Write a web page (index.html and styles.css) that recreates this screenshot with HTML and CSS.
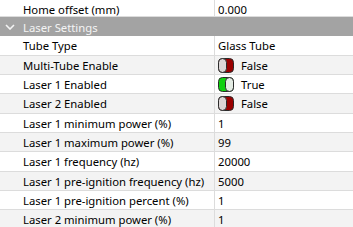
FILE: index.html
```html
<!DOCTYPE html>
<html>
<head>
<meta charset="utf-8">
<link rel="stylesheet" href="styles.css">
</head>
<body>
<div class="grid">
  <div class="row odd first"><div class="label">Home offset (mm)</div><div class="value">0.000</div></div>
  <div class="cat"><svg class="chev" width="10" height="6" viewBox="0 0 10 6"><polyline points="1,1 5,5 9,1" fill="none" stroke="#f4f4f4" stroke-width="1.6"/></svg><span>Laser Settings</span></div>
  <div class="row odd"><div class="label">Tube Type</div><div class="value">Glass Tube</div></div>
  <div class="row even"><div class="label">Multi-Tube Enable</div><div class="value"><svg class="toggle" width="16" height="15" viewBox="0 0 16 15"><rect x="0.5" y="0.5" width="15" height="14" rx="4" fill="#9a0000" stroke="#2a2a2a"/><rect x="0.5" y="0.5" width="8" height="14" rx="4" fill="#dcd6d6" stroke="#2a2a2a"/></svg><span>False</span></div></div>
  <div class="row odd"><div class="label">Laser 1 Enabled</div><div class="value"><svg class="toggle" width="16" height="15" viewBox="0 0 16 15"><rect x="0.5" y="0.5" width="15" height="14" rx="4" fill="#10d010" stroke="#2a2a2a"/><rect x="7.5" y="0.5" width="8" height="14" rx="4" fill="#e4ece4" stroke="#2a2a2a"/></svg><span>True</span></div></div>
  <div class="row even"><div class="label">Laser 2 Enabled</div><div class="value"><svg class="toggle" width="16" height="15" viewBox="0 0 16 15"><rect x="0.5" y="0.5" width="15" height="14" rx="4" fill="#9a0000" stroke="#2a2a2a"/><rect x="0.5" y="0.5" width="8" height="14" rx="4" fill="#dcd6d6" stroke="#2a2a2a"/></svg><span>False</span></div></div>
  <div class="row odd"><div class="label">Laser 1 minimum power (%)</div><div class="value">1</div></div>
  <div class="row even"><div class="label">Laser 1 maximum power (%)</div><div class="value">99</div></div>
  <div class="row odd"><div class="label">Laser 1 frequency (hz)</div><div class="value">20000</div></div>
  <div class="row even"><div class="label">Laser 1 pre-ignition frequency (hz)</div><div class="value">5000</div></div>
  <div class="row odd"><div class="label">Laser 1 pre-ignition percent (%)</div><div class="value">1</div></div>
  <div class="row even"><div class="label">Laser 2 minimum power (%)</div><div class="value">1</div></div>
</div>
</body>
</html>
```
FILE: styles.css
```css
html, body {
  margin: 0;
  padding: 0;
  background: #ffffff;
  overflow: hidden;
}
.grid {
  font-family: "Noto Sans", "DejaVu Sans", sans-serif;
  font-size: 11.3px;
  color: #000;
  width: 353px;
}
.row {
  display: flex;
  height: 18.33px;
  border-bottom: 1px solid #dcdcdc;
  white-space: nowrap;
}
.row.first { height: 16px; }
.row.even { background: #f3f3f3; }
.row.odd { background: #ffffff; }
.label {
  width: 191px;
  flex: none;
  padding-left: 23px;
  border-right: 1px solid #dcdcdc;
  display: flex;
  align-items: center;
  padding-top: 1px;
  box-sizing: border-box;
  width: 215px;
  position: relative;
  z-index: 1;
}
.first .label, .first .value { padding-top: 2px; }
.value {
  flex: 1;
  padding-left: 3px;
  padding-top: 1px;
  display: flex;
  align-items: center;
  gap: 7px;
}
.toggle { flex: none; margin-top: 0; }
.cat {
  display: flex;
  align-items: center;
  height: 19.33px;
  padding-top: 1px;
  box-sizing: border-box;
  background: #a3a3a3;
  color: #f4f4f4;
  white-space: nowrap;
}
.chev { margin-left: 5px; margin-right: 8px; flex: none; margin-top: -1px; }
```
